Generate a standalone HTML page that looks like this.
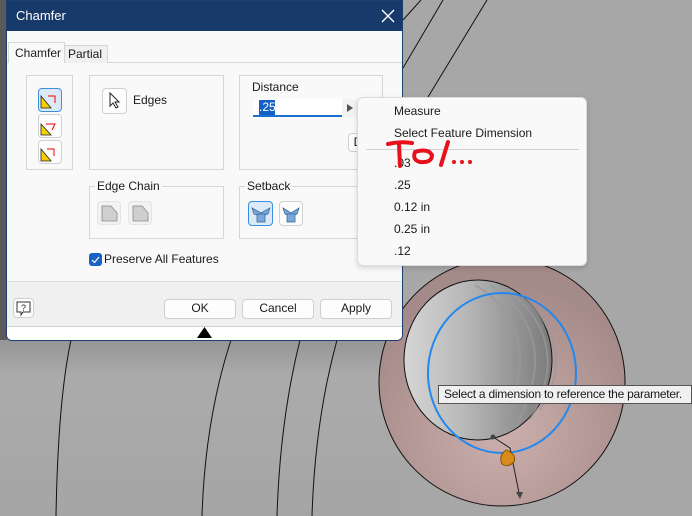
<!DOCTYPE html>
<html><head><meta charset="utf-8"><style>
*{margin:0;padding:0;box-sizing:border-box}
body{width:692px;height:516px;overflow:hidden;position:relative;background:#a7a7a7;font-family:"Segoe UI","Liberation Sans",sans-serif;font-size:12px;color:#1a1a1a}
.a{position:absolute}
.grp{position:absolute;border:1px solid #d6d6d6}
.lbl{position:absolute;background:#f9f9f9;padding:0 2px;font-size:12px}
.btn{position:absolute;background:#fdfdfd;border:1px solid #cfcfcf;border-radius:4px;text-align:center;line-height:17px;font-size:12px}
.ib{position:absolute;width:24px;height:24px;background:#fdfdfd;border:1px solid #d0d0d0;border-radius:4px}
.mi{position:absolute;left:36px;font-size:12px}
</style></head><body>
<svg class="a" style="left:0;top:0" width="692" height="516">
<defs>
<radialGradient id="rg" cx="0.5" cy="0.7" r="0.6"><stop offset="0" stop-color="#cdb0ae"/><stop offset="1" stop-color="#a48a88"/></radialGradient>
<linearGradient id="hg" x1="0" y1="0" x2="1" y2="0"><stop offset="0" stop-color="#d5d5d5"/><stop offset="0.4" stop-color="#b9b9b9"/><stop offset="1" stop-color="#7a7a7a"/></linearGradient>
<linearGradient id="bg" x1="0" y1="0" x2="0" y2="1"><stop offset="0" stop-color="#8f8f8f"/><stop offset="0.25" stop-color="#ababab"/><stop offset="1" stop-color="#a5a5a5"/></linearGradient>
</defs>
<rect x="0" y="330" width="400" height="186" fill="url(#bg)"/>
<rect x="0" y="0" width="7" height="340" fill="#5a5a5a"/>
<path d="M421 0 L403 20 M443 0 L403 68 M487 0 L428 97" stroke="#111" fill="none"/>
<path d="M71 340 Q58 400 56 516 M231 340 Q205 420 202 516 M300 340 Q280 420 277 516 M337 340 Q315 420 312 516" stroke="#111" fill="none"/>
<ellipse cx="502" cy="382" rx="123" ry="124" fill="url(#rg)" stroke="#111"/>
<ellipse cx="478" cy="360" rx="74" ry="80" fill="url(#hg)" stroke="#111"/>
<g stroke="#9a9a9a" fill="none" stroke-width="2" opacity="0.7">
<path d="M475 285 Q550 330 500 430"/><path d="M490 285 Q565 335 515 428"/><path d="M505 288 Q575 340 530 420"/><path d="M520 292 Q580 350 540 410"/>
</g>
<ellipse cx="502" cy="373" rx="74" ry="80" fill="none" stroke="#2288ee" stroke-width="2"/>
<path d="M493 437 L510 448 L520 498" stroke="#222" fill="none"/>
<circle cx="493" cy="437" r="2.5" fill="#444"/>
<path d="M506 450 q-8 6 -4 14 q6 4 12 -2 q3 -8 -8 -12z" fill="#d98a1a" stroke="#8a5200"/>
<path d="M516 492 l4 7 l3 -7z" fill="#444"/>
</svg>
<!-- dialog -->
<div class="a" style="left:6px;top:0;width:397px;height:341px;background:#f9f9f9;border:1px solid #1d3f70;border-radius:0 0 6px 6px;overflow:hidden">
 <div class="a" style="left:0;top:0;width:397px;height:30px;background:#183a6a;color:#fff;font-size:13px;line-height:30px;padding-left:9px">Chamfer</div>
 <svg class="a" style="left:374px;top:8px" width="14" height="14"><path d="M1 1L13 13M13 1L1 13" stroke="#fff" stroke-width="1.4"/></svg>
 <div class="a" style="left:0;top:61px;width:397px;height:1px;background:#d6d6d6"></div>
 <div class="a" style="left:1px;top:41px;width:57px;height:21px;background:#f9f9f9;border:1px solid #d6d6d6;border-bottom:none;padding-left:6px;line-height:20px">Chamfer</div>
 <div class="a" style="left:57px;top:44px;width:44px;height:18px;background:#f0f0f0;border:1px solid #d6d6d6;border-bottom:none;padding-left:3px;line-height:17px">Partial</div>
 <div class="grp" style="left:19px;top:74px;width:47px;height:95px"></div>
 <div class="ib" style="left:31px;top:87px;background:#dceaf8;border-color:#3a8ee0"></div>
 <div class="ib" style="left:31px;top:113px"></div>
 <div class="ib" style="left:31px;top:139px"></div>
 <svg class="a" style="left:31px;top:87px" width="24" height="80">
  <g><path d="M3 8 L13 20 L3 20z" fill="#f5d000" stroke="#222" stroke-width=".8"/><path d="M10 8h7v7" stroke="#e00" fill="none"/></g>
  <g transform="translate(0,27)"><path d="M3 9 L13 20 L3 20z" fill="#f5d000" stroke="#222" stroke-width=".8"/><path d="M8 9h9l-3 6" stroke="#e00" fill="none"/></g>
  <g transform="translate(0,53)"><path d="M3 8 L13 20 L3 20z" fill="#f5d000" stroke="#222" stroke-width=".8"/><path d="M9 8h7v7" stroke="#e00" fill="none"/></g>
 </svg>
 <div class="grp" style="left:82px;top:74px;width:135px;height:95px"></div>
 <div class="ib" style="left:95px;top:87px;width:25px;height:26px"></div>
 <svg class="a" style="left:101px;top:91px" width="14" height="18"><path d="M2 1v13l3-3 3 5 2-1-3-5h4z" fill="#fff" stroke="#222"/></svg>
 <div class="a" style="left:126px;top:92px;font-size:12px">Edges</div>
 <div class="grp" style="left:232px;top:74px;width:144px;height:95px"></div>
 <div class="a" style="left:245px;top:79px">Distance</div>
 <div class="a" style="left:246px;top:98px;width:89px;height:18px;background:#fff;border-bottom:2px solid #1a6fd0"></div>
 <div class="a" style="left:252px;top:99px;width:16px;height:15px;background:#1560c8;color:#fff;line-height:15px;font-size:12px">.25</div>
 <div class="a" style="left:335px;top:98px;width:15px;height:18px;background:#f3f3f3"></div>
 <svg class="a" style="left:339px;top:102px" width="8" height="10"><path d="M1 1l6 4-6 4z" fill="#555"/></svg>
 <div class="btn" style="left:341px;top:132px;width:20px;height:19px;line-height:17px">D</div>
 <div class="grp" style="left:82px;top:185px;width:135px;height:53px"></div>
 <div class="lbl" style="left:88px;top:178px">Edge Chain</div>
 <div class="ib" style="left:90px;top:200px;background:#f2f2f2;border-color:#e4e4e4"></div>
 <div class="ib" style="left:121px;top:200px;background:#f2f2f2;border-color:#e4e4e4"></div>
 <svg class="a" style="left:90px;top:200px" width="60" height="24"><path d="M5 5h9l6 7v8H5z" fill="#cfcfcf" stroke="#888" stroke-width=".8"/><path d="M36 5h9l6 7v8H36z" fill="#cfcfcf" stroke="#888" stroke-width=".8"/></svg>
 <div class="grp" style="left:232px;top:185px;width:130px;height:53px"></div>
 <div class="lbl" style="left:238px;top:178px">Setback</div>
 <div class="ib" style="left:241px;top:200px;width:25px;height:25px;background:#dceaf8;border-color:#3a8ee0"></div>
 <div class="ib" style="left:272px;top:200px;width:24px;height:25px"></div>
 <svg class="a" style="left:241px;top:200px" width="56" height="25"><g fill="#7aa8d8" stroke="#3b6aa0" stroke-width=".8"><path d="M4 7l9 5 9-5-2 6-7 2-7-2z"/><rect x="9" y="13" width="8" height="8"/><path d="M35 7l8 5 8-5-2 6-6 2-6-2z"/><rect x="39" y="13" width="8" height="8"/></g></svg>
 <div class="a" style="left:82px;top:252px;width:13px;height:13px;background:#1a63c4;border-radius:3px"></div>
 <svg class="a" style="left:83px;top:253px" width="11" height="11"><path d="M2 6l2.5 2.5L9 3" stroke="#fff" fill="none" stroke-width="1.2"/></svg>
 <div class="a" style="left:97px;top:251px">Preserve All Features</div>
 <div class="a" style="left:0;top:280px;width:397px;height:45px;background:#f0f0f0;border-top:1px solid #dcdcdc"></div>
 <div class="ib" style="left:6px;top:297px;width:21px;height:20px"></div>
 <svg class="a" style="left:9px;top:300px" width="16" height="16"><path d="M1 1h13v10H7l-2 3v-3H1z" fill="#fff" stroke="#333"/><text x="5" y="10" font-size="9" font-family="Liberation Sans" fill="#222">?</text></svg>
 <div class="btn" style="left:157px;top:298px;width:72px;height:20px">OK</div>
 <div class="btn" style="left:235px;top:298px;width:72px;height:20px">Cancel</div>
 <div class="btn" style="left:313px;top:298px;width:72px;height:20px">Apply</div>
 <div class="a" style="left:0;top:325px;width:397px;height:16px;background:#fff;border-top:1px solid #d0d0d0"></div>
 <svg class="a" style="left:189px;top:325px" width="17" height="13"><path d="M8.5 1L16 12H1z" fill="#000"/></svg>
</div>
<!-- menu -->
<div class="a" style="left:357px;top:97px;width:230px;height:169px;background:#f9f9f9;border:1px solid #dcdcdc;border-radius:6px;box-shadow:0 2px 6px rgba(0,0,0,.15)">
 <div class="mi" style="top:6px">Measure</div>
 <div class="mi" style="top:28px">Select Feature Dimension</div>
 <div class="a" style="left:8px;top:51px;width:213px;height:1px;background:#d0d0d0"></div>
 <div class="mi" style="top:58px">.03</div>
 <div class="mi" style="top:80px">.25</div>
 <div class="mi" style="top:102px">0.12 in</div>
 <div class="mi" style="top:124px">0.25 in</div>
 <div class="mi" style="top:146px">.12</div>
</div>
<svg class="a" style="left:0;top:0" width="692" height="516"><g stroke="#e8101a" stroke-width="4" fill="none" stroke-linecap="round"><path d="M388 144Q400 141 412 143M399 144L400 166"/><path d="M415 152Q428 148 432 155Q432 163 420 162Q412 160 415 152z"/><path d="M448 142L441 165"/></g><g fill="#e8101a"><circle cx="454" cy="162" r="2"/><circle cx="462" cy="162" r="2"/><circle cx="470" cy="162" r="2"/></g></svg>
<div class="a" style="left:438px;top:385px;width:254px;height:19px;background:#f0f0f0;border:1px solid #555;font-size:12px;letter-spacing:-0.25px;line-height:17px;padding-left:5px;white-space:nowrap;overflow:hidden">Select a dimension to reference the parameter.</div>
</body></html>
